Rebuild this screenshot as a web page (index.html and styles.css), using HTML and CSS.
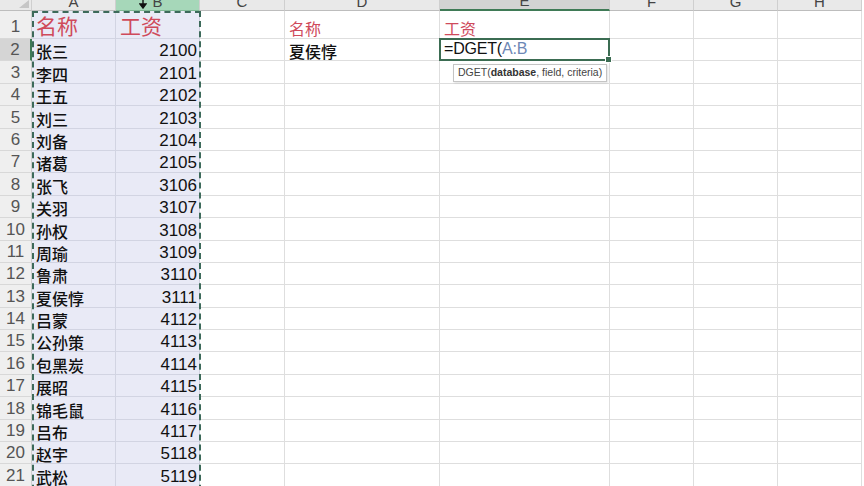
FILE: index.html
```html
<!DOCTYPE html>
<html lang="zh-CN">
<head>
  <meta charset="UTF-8">
  <title>DGET</title>
  <link rel="stylesheet" href="styles.css">
</head>
<body>
  <div class="sheet">
    <!-- column headers -->
    <div class="ch corner"></div>
    <div class="ch">A</div>
    <div class="ch hover">B
      <svg class="cursor" width="8" height="9" viewBox="0 0 8 9"><path d="M4 0 L4 6 M1 4 L4 8 L7 4 Z" stroke="#111" stroke-width="1.4" fill="#111"/></svg>
    </div>
    <div class="ch">C</div>
    <div class="ch">D</div>
    <div class="ch active">E</div>
    <div class="ch">F</div>
    <div class="ch">G</div>
    <div class="ch">H</div>

    <!-- row 1 -->
    <div class="rh big">1</div>
    <div class="c sel title">名称</div>
    <div class="c sel title">工资</div>
    <div class="c"></div>
    <div class="c red">名称</div>
    <div class="c red">工资</div>
    <div class="c"></div><div class="c"></div><div class="c"></div>

    <!-- row 2 -->
    <div class="rh active">2</div>
    <div class="c sel">张三</div>
    <div class="c sel num">2100</div>
    <div class="c"></div>
    <div class="c">夏侯惇</div>
    <div class="c editing">=DGET(<span class="ref">A:B</span>
      <span class="handle"></span>
      <div class="tip">DGET(<b>database</b>, field, criteria)</div>
    </div>
    <div class="c"></div><div class="c"></div><div class="c"></div>

    <div class="rh">3</div><div class="c sel">李四</div><div class="c sel num">2101</div>
    <div class="c"></div><div class="c"></div><div class="c"></div><div class="c"></div><div class="c"></div><div class="c"></div>

    <div class="rh">4</div><div class="c sel">王五</div><div class="c sel num">2102</div>
    <div class="c"></div><div class="c"></div><div class="c"></div><div class="c"></div><div class="c"></div><div class="c"></div>

    <div class="rh">5</div><div class="c sel">刘三</div><div class="c sel num">2103</div>
    <div class="c"></div><div class="c"></div><div class="c"></div><div class="c"></div><div class="c"></div><div class="c"></div>

    <div class="rh">6</div><div class="c sel">刘备</div><div class="c sel num">2104</div>
    <div class="c"></div><div class="c"></div><div class="c"></div><div class="c"></div><div class="c"></div><div class="c"></div>

    <div class="rh">7</div><div class="c sel">诸葛</div><div class="c sel num">2105</div>
    <div class="c"></div><div class="c"></div><div class="c"></div><div class="c"></div><div class="c"></div><div class="c"></div>

    <div class="rh">8</div><div class="c sel">张飞</div><div class="c sel num">3106</div>
    <div class="c"></div><div class="c"></div><div class="c"></div><div class="c"></div><div class="c"></div><div class="c"></div>

    <div class="rh">9</div><div class="c sel">关羽</div><div class="c sel num">3107</div>
    <div class="c"></div><div class="c"></div><div class="c"></div><div class="c"></div><div class="c"></div><div class="c"></div>

    <div class="rh">10</div><div class="c sel">孙权</div><div class="c sel num">3108</div>
    <div class="c"></div><div class="c"></div><div class="c"></div><div class="c"></div><div class="c"></div><div class="c"></div>

    <div class="rh">11</div><div class="c sel">周瑜</div><div class="c sel num">3109</div>
    <div class="c"></div><div class="c"></div><div class="c"></div><div class="c"></div><div class="c"></div><div class="c"></div>

    <div class="rh">12</div><div class="c sel">鲁肃</div><div class="c sel num">3110</div>
    <div class="c"></div><div class="c"></div><div class="c"></div><div class="c"></div><div class="c"></div><div class="c"></div>

    <div class="rh">13</div><div class="c sel">夏侯惇</div><div class="c sel num">3111</div>
    <div class="c"></div><div class="c"></div><div class="c"></div><div class="c"></div><div class="c"></div><div class="c"></div>

    <div class="rh">14</div><div class="c sel">吕蒙</div><div class="c sel num">4112</div>
    <div class="c"></div><div class="c"></div><div class="c"></div><div class="c"></div><div class="c"></div><div class="c"></div>

    <div class="rh">15</div><div class="c sel">公孙策</div><div class="c sel num">4113</div>
    <div class="c"></div><div class="c"></div><div class="c"></div><div class="c"></div><div class="c"></div><div class="c"></div>

    <div class="rh">16</div><div class="c sel">包黑炭</div><div class="c sel num">4114</div>
    <div class="c"></div><div class="c"></div><div class="c"></div><div class="c"></div><div class="c"></div><div class="c"></div>

    <div class="rh">17</div><div class="c sel">展昭</div><div class="c sel num">4115</div>
    <div class="c"></div><div class="c"></div><div class="c"></div><div class="c"></div><div class="c"></div><div class="c"></div>

    <div class="rh">18</div><div class="c sel">锦毛鼠</div><div class="c sel num">4116</div>
    <div class="c"></div><div class="c"></div><div class="c"></div><div class="c"></div><div class="c"></div><div class="c"></div>

    <div class="rh">19</div><div class="c sel">吕布</div><div class="c sel num">4117</div>
    <div class="c"></div><div class="c"></div><div class="c"></div><div class="c"></div><div class="c"></div><div class="c"></div>

    <div class="rh">20</div><div class="c sel">赵宇</div><div class="c sel num">5118</div>
    <div class="c"></div><div class="c"></div><div class="c"></div><div class="c"></div><div class="c"></div><div class="c"></div>

    <div class="rh">21</div><div class="c sel">武松</div><div class="c sel num">5119</div>
    <div class="c"></div><div class="c"></div><div class="c"></div><div class="c"></div><div class="c"></div><div class="c"></div>

    <!-- copy marquee around A:B -->
    <div class="marquee"></div>
  </div>
</body>
</html>
```

FILE: styles.css
```css
body {
  margin: 0;
  background-color: #ffffff;
  overflow: hidden;
  font-family: "Liberation Sans", "Noto Sans CJK SC", sans-serif;
}

.sheet {
  position: relative;
  display: grid;
  grid-template-columns: 32px 84px 84px 85px 155px 170px 84px 84px 84px;
  grid-template-rows: 11px 28px;
  grid-auto-rows: 22.4px;
  width: 862px;
}

.sheet > div {
  box-sizing: border-box;
}

/* column headers */
.ch {
  position: relative;
  background-color: #e9e9e9;
  border-right: 1px solid #cfcfcf;
  border-bottom: 1px solid #bdbdbd;
  color: #444;
  font-size: 15px;
  line-height: 1;
  display: flex;
  justify-content: center;
  align-items: flex-end;
  padding-bottom: 1px;
  overflow: hidden;
}

.ch.corner {
  background-color: #e9e9e9;
}

.ch.corner::after {
  content: "";
  position: absolute;
  right: 2px;
  bottom: 2px;
  border-left: 10px solid transparent;
  border-bottom: 8px solid #c6c6c6;
}

.ch.hover {
  background-color: #a6d7b9;
  border-bottom: 1px solid #7fb894;
}

.ch.active {
  background-color: #d3d3d3;
  border-bottom: 2px solid #3f7a56;
}

.cursor {
  position: absolute;
  left: 23px;
  top: 0;
}

/* row headers */
.rh {
  background-color: #efefef;
  border-right: 1px solid #cfcfcf;
  border-bottom: 1px solid #d8d8d8;
  color: #555;
  font-size: 17px;
  display: flex;
  justify-content: center;
  align-items: flex-end;
  line-height: 1;
  padding-bottom: 2px;
}

.rh.big {
  padding-bottom: 3px;
}

.rh.active {
  background-color: #d5d5d5;
  border-right: 2px solid #3f7a56;
}

/* cells */
.c {
  border-right: 1px solid #dedede;
  border-bottom: 1px solid #dedede;
  font-family: "Noto Sans CJK SC", "Liberation Sans", sans-serif;
  font-size: 16px;
  font-weight: 500;
  line-height: 1;
  color: #111;
  display: flex;
  align-items: flex-end;
  padding: 0 0 1px 4px;
  white-space: nowrap;
}

.c.sel {
  background-color: #e9eaf6;
  border-right-color: #d2d4e2;
  border-bottom-color: #d2d4e2;
}

.c.num {
  justify-content: flex-end;
  padding-right: 2px;
  font-family: "Liberation Sans", sans-serif;
  font-size: 17px;
  font-weight: 400;
  padding-bottom: 1px;
}

.c.title {
  color: #cf4a5b;
  font-size: 21px;
  font-weight: 400;
  padding-bottom: 2px;
}

.c.red {
  color: #cf4a5b;
  font-size: 16px;
  font-weight: 400;
  padding-bottom: 2px;
}

.c.editing {
  position: relative;
  border: 2px solid #3b6c52;
  margin: -1px 0 0 -1px;
  font-family: "Liberation Sans", sans-serif;
  font-size: 16px;
  font-weight: 400;
  letter-spacing: -0.2px;
  padding: 0 0 2px 3px;
}

.ref {
  color: #6d87b5;
}

.handle {
  position: absolute;
  right: -4px;
  bottom: -4px;
  width: 5px;
  height: 5px;
  background-color: #3b6c52;
  border: 1px solid #fff;
}

.tip {
  position: absolute;
  left: 12px;
  top: 24px;
  z-index: 3;
  background-color: #fff;
  border: 1px solid #c4c4c4;
  box-shadow: 1px 1px 2px rgba(0, 0, 0, 0.12);
  font-family: "Liberation Sans", sans-serif;
  font-size: 10.5px;
  letter-spacing: 0;
  color: #444;
  padding: 2px 4px;
  line-height: 1.1;
}

.tip b {
  color: #333;
}

.marquee {
  position: absolute;
  left: 32px;
  top: 11px;
  width: 169px;
  height: 500px;
  border: 2px dashed #3d6a5a;
  pointer-events: none;
}
```
